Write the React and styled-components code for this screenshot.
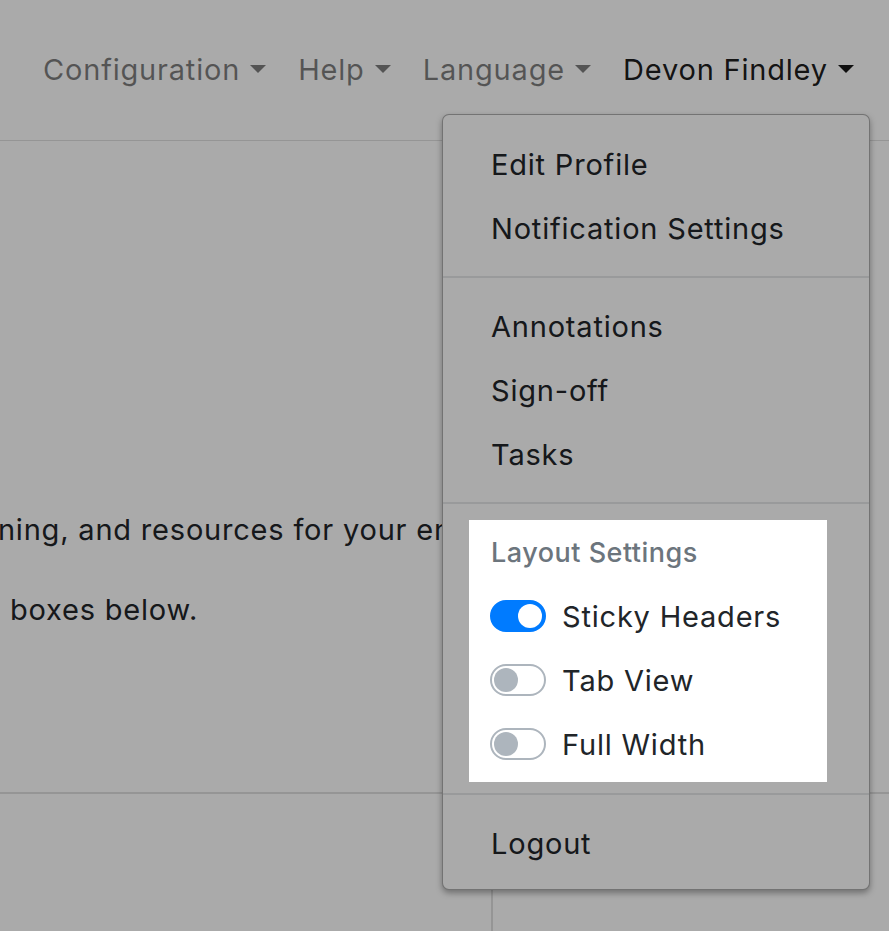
import React from "react";
import styled, { createGlobalStyle } from "styled-components";

const GlobalStyle = createGlobalStyle`
  html, body {
    margin: 0;
    padding: 0;
    background: #fff;
    overflow: hidden;
  }
  body {
    font-family: Inter, "Noto Sans", "Liberation Sans", sans-serif;
    color: #212529;
    letter-spacing: 0.8px;
    width: 889px;
    height: 931px;
  }
`;

const Page = styled.div`
  width: 889px;
  height: 931px;
  display: flex;
  flex-direction: column;
  overflow: hidden;
`;

const Navbar = styled.nav`
  height: 140px;
  border-bottom: 1px solid #e0e0e0;
  display: flex;
  align-items: center;
  justify-content: flex-end;
  padding-right: 19px;
  flex-shrink: 0;
`;

const NavItem = styled.div`
  position: relative;
`;

const NavLink = styled.a`
  display: block;
  padding: 0 16px;
  font-size: 29px;
  line-height: 44px;
  white-space: nowrap;
  color: ${(p) => (p.$active ? "rgba(0, 0, 0, 0.9)" : "rgba(0, 0, 0, 0.5)")};
  cursor: pointer;

  &::after {
    content: "";
    display: inline-block;
    margin-left: 0.35em;
    vertical-align: 0.255em;
    border-top: 0.3em solid;
    border-right: 0.3em solid transparent;
    border-left: 0.3em solid transparent;
  }
`;

const Menu = styled.div`
  position: absolute;
  top: calc(100% + 22px);
  right: 0;
  width: 426px;
  padding: 17px 0 14px;
  background: #fff;
  border: 1px solid rgba(0, 0, 0, 0.32);
  border-radius: 7px;
  box-shadow: 0 3px 6px rgba(0, 0, 0, 0.35);
`;

const MenuItem = styled.a`
  display: flex;
  align-items: center;
  height: 64px;
  padding-left: 48px;
  font-size: 29px;
  color: #212529;
  white-space: nowrap;
  cursor: pointer;
`;

const Divider = styled.div`
  height: 2px;
  margin: ${(p) => p.$top || 16}px 0 16px;
  background: #e6e7e9;
`;

const Spotlight = styled.form`
  position: relative;
  z-index: 60;
  margin: 15px 42px 0 26px;
  padding: 0 0 6px 21px;
  background: #fff;
`;

const MenuHeader = styled.div`
  display: flex;
  align-items: center;
  height: 64px;
  padding-left: 1px;
  font-size: 27px;
  font-weight: 500;
  letter-spacing: 0.5px;
  color: #6c757d;
  white-space: nowrap;
`;

const SwitchRow = styled.label`
  display: flex;
  align-items: center;
  gap: 16px;
  height: 64px;
  font-size: 29px;
  color: #212529;
  white-space: nowrap;
  cursor: pointer;
`;

const Track = styled.span`
  position: relative;
  box-sizing: border-box;
  width: 56px;
  height: 32px;
  border-radius: 16px;
  border: 2px solid ${(p) => (p.$on ? "#007bff" : "#adb5bd")};
  background: ${(p) => (p.$on ? "#007bff" : "#fff")};
  flex-shrink: 0;
`;

const Knob = styled.span`
  position: absolute;
  top: 2px;
  left: ${(p) => (p.$on ? "26px" : "2px")};
  width: 24px;
  height: 24px;
  border-radius: 50%;
  background: ${(p) => (p.$on ? "#fff" : "#adb5bd")};
`;

const Content = styled.main`
  height: 653px;
  flex-shrink: 0;
  border-bottom: 2px solid #e0e0e0;
  padding-top: 367px;
  box-sizing: border-box;
  display: flex;
  flex-direction: column;
  gap: 36px;
`;

const Lead = styled.p`
  margin: 0 0 0 ${(p) => p.$shift}px;
  font-size: 29px;
  line-height: 44px;
  white-space: nowrap;
  color: #212529;
`;

const Panels = styled.section`
  flex: 1;
  display: grid;
  grid-template-columns: 493px 1fr;
`;

const Panel = styled.div`
  border-right: ${(p) => (p.$edge ? "2px solid #e0e0e0" : "none")};
`;

const Overlay = styled.div`
  position: fixed;
  inset: 0;
  z-index: 50;
  background: rgba(0, 0, 0, 0.333);
`;

const Switch = ({ on, label }) => (
  <SwitchRow>
    <Track $on={on}>
      <Knob $on={on} />
    </Track>
    {label}
  </SwitchRow>
);

const App = () => {
  return (
    <Page>
      <GlobalStyle />
      <Navbar>
        <NavItem>
          <NavLink>Configuration</NavLink>
        </NavItem>
        <NavItem>
          <NavLink>Help</NavLink>
        </NavItem>
        <NavItem>
          <NavLink>Language</NavLink>
        </NavItem>
        <NavItem>
          <NavLink $active>Devon Findley</NavLink>
          <Menu>
            <MenuItem>Edit Profile</MenuItem>
            <MenuItem>Notification Settings</MenuItem>
            <Divider />
            <MenuItem>Annotations</MenuItem>
            <MenuItem>Sign-off</MenuItem>
            <MenuItem>Tasks</MenuItem>
            <Divider />
            <Spotlight>
              <MenuHeader>Layout Settings</MenuHeader>
              <Switch on label="Sticky Headers" />
              <Switch label="Tab View" />
              <Switch label="Full Width" />
            </Spotlight>
            <Divider $top={11} />
            <MenuItem>Logout</MenuItem>
          </Menu>
        </NavItem>
      </Navbar>
      <Content>
        <Lead $shift={-49}>training, and resources for your environment.</Lead>
        <Lead $shift={-45}>the boxes below.</Lead>
      </Content>
      <Panels>
        <Panel $edge />
        <Panel />
      </Panels>
      <Overlay />
    </Page>
  );
};

export default App;
